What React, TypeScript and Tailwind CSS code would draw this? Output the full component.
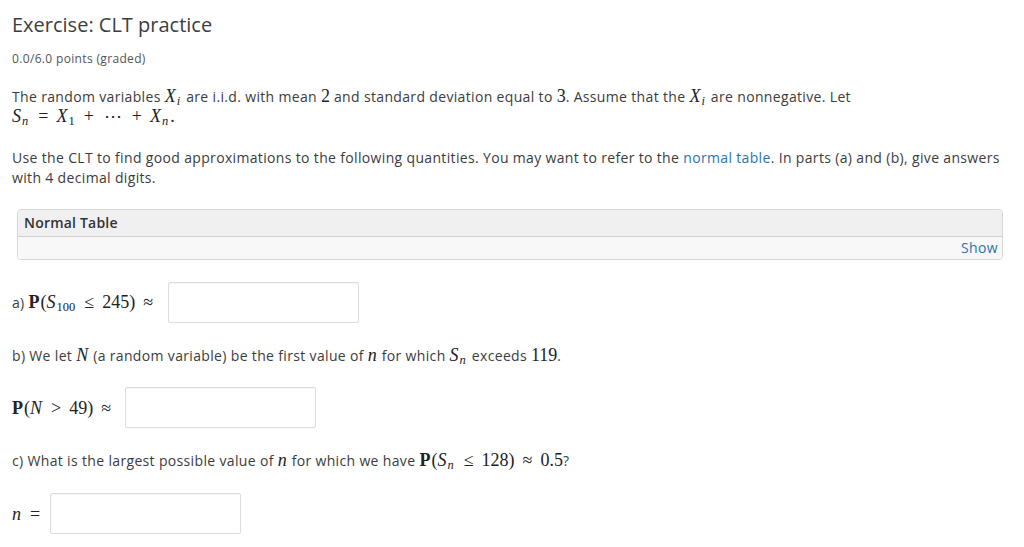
import type { ReactNode } from 'react'

const serif = { fontFamily: '"Liberation Serif", "DejaVu Serif", serif' }

function M({ children }: { children: ReactNode }) {
  return (
    <span className="text-[18px] leading-none tracking-normal text-[#222] whitespace-nowrap" style={serif}>
      {children}
    </span>
  )
}

function V({ children }: { children: ReactNode }) {
  return <i className="italic pr-[1px]">{children}</i>
}

function Sub({ children }: { children: ReactNode }) {
  return <sub className="text-[12.5px] leading-none relative top-[3px] align-baseline pr-[1px]">{children}</sub>
}

function Op({ children }: { children: ReactNode }) {
  return <span className="mx-[8px]">{children}</span>
}

function Answer({ className }: { className?: string }) {
  return (
    <input
      type="text"
      className={`h-[41px] w-[191px] rounded-[2px] border border-[#dcdcdc] bg-white shadow-[inset_0_1px_1px_rgba(0,0,0,0.04)] outline-none ${className ?? ''}`}
    />
  )
}

export default function App() {
  return (
    <div
      className="min-h-screen bg-white text-[#3c3c3c] tracking-[0.34px]"
      style={{ fontFamily: '"Open Sans", "Noto Sans", sans-serif' }}
    >
      <div className="px-3 pt-[10px]">
        <h2 className="text-[20px] leading-[30px] tracking-normal text-[#3d3d3d]">Exercise: CLT practice</h2>
        <div className="mt-[10px] text-[12px] leading-[18px] text-[#555]">0.0/6.0 points (graded)</div>

        <p className="mt-[19px] text-[14px] leading-[20px]">
          The random variables <M><V>X</V><Sub><V>i</V></Sub></M> are i.i.d. with mean <M>2</M> and standard
          deviation equal to <M>3</M>. Assume that the <M><V>X</V><Sub><V>i</V></Sub></M> are nonnegative. Let
          <br />
          <M>
            <V>S</V><Sub><V>n</V></Sub><Op>=</Op><V>X</V><Sub>1</Sub><Op>+</Op>
            <span className="mx-[2px]">⋯</span>
            <Op>+</Op><V>X</V><Sub><V>n</V></Sub>.
          </M>
        </p>

        <p className="mt-[21px] text-[14px] leading-[20px]">
          Use the CLT to find good approximations to the following quantities. You may want to refer to the{' '}
          <a className="text-[#2a74ad]">normal table</a>. In parts (a) and (b), give answers with 4 decimal digits.
        </p>

        <div className="mt-[21px] ml-[5px] mr-[9px] overflow-hidden rounded-[4px] border border-[#d6d6d6]">
          <div className="h-[27px] border-b border-[#d0d0d0] bg-[#f0f0f0] pl-[6px] text-[14px] font-semibold leading-[26px] tracking-[0.2px] text-[#333]">
            Normal Table
          </div>
          <div className="flex h-[22px] justify-end bg-[#f8f8f8] pr-[4px]">
            <a className="text-[14px] leading-[22px] text-[#2a74ad]">Show</a>
          </div>
        </div>

        <div className="mt-[22px] flex items-center text-[14px]">
          <span>a)</span>
          <span className="ml-[4px]">
            <M>
              <b className="font-bold pr-[1px]">P</b>(<V>S</V><Sub>100</Sub><Op>≤</Op>245)<Op>≈</Op>
            </M>
          </span>
          <Answer className="ml-[7px]" />
        </div>

        <p className="mt-[23px] text-[14px] leading-[20px]">
          b) We let <M><V>N</V></M> (a random variable) be the first value of <M><V>n</V></M> for which{' '}
          <M><V>S</V><Sub><V>n</V></Sub></M> exceeds <M>119</M>.
        </p>

        <div className="mt-[21px] flex items-center">
          <M>
            <b className="font-bold pr-[1px]">P</b>(<V>N</V><Op>&gt;</Op>49)<Op>≈</Op>
          </M>
          <Answer className="ml-[6px]" />
        </div>

        <p className="mt-[23px] text-[14px] leading-[20px]">
          c) What is the largest possible value of <M><V>n</V></M> for which we have{' '}
          <M>
            <b className="font-bold pr-[1px]">P</b>(<V>S</V><Sub><V>n</V></Sub><Op>≤</Op>128)<Op>≈</Op>0.5
          </M>
          ?
        </p>

        <div className="mt-[22px] flex items-center">
          <M>
            <V>n</V><Op>=</Op>
          </M>
          <Answer className="ml-[2px]" />
        </div>
      </div>
    </div>
  )
}
